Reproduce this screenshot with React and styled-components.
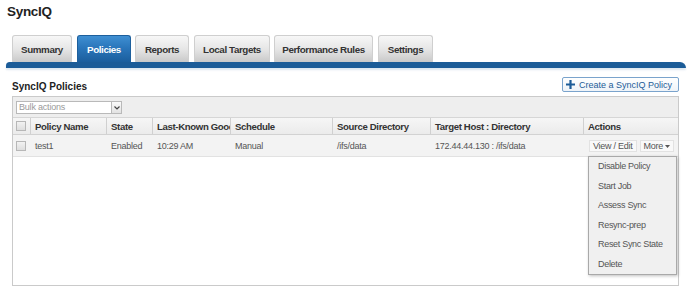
import React from "react";
import styled, { createGlobalStyle } from "styled-components";

const Global = createGlobalStyle`
  html, body { margin: 0; padding: 0; background: #fff; }
  body { font-family: "Liberation Sans", Arial, sans-serif; color: #333; }
  * { box-sizing: border-box; }
`;

const Page = styled.div`
  width: 687px;
  height: 297px;
  padding-top: 4px;
  overflow: hidden;
`;

const Title = styled.h1`
  margin: 0 0 0 7px;
  font-size: 13.5px;
  line-height: 16px;
  font-weight: bold;
  letter-spacing: -0.3px;
  color: #222;
`;

const TabRow = styled.div`
  display: flex;
  align-items: flex-end;
  margin-top: 15px;
  padding-left: 12px;
  height: 27px;
`;

const Tab = styled.div`
  width: ${(p) => p.$w}px;
  margin-right: ${(p) => p.$gap}px;
  height: 27px;
  display: flex;
  align-items: center;
  justify-content: center;
  font-size: 9.8px;
  font-weight: bold;
  letter-spacing: -0.4px;
  white-space: nowrap;
  border-radius: 3px 3px 0 0;
  border: 1px solid ${(p) => (p.$active ? "#1d5f9c" : "#cfcfcf")};
  border-bottom: none;
  color: ${(p) => (p.$active ? "#fff" : "#333")};
  background: ${(p) =>
    p.$active
      ? "linear-gradient(#3f8fd2, #2a76bb 45%, #1b5e9d)"
      : "linear-gradient(#f7f7f7, #e6e6e6 50%, #c9c9c9)"};
`;

const BlueBar = styled.div`
  height: 6px;
  margin: 0 1px 0 6px;
  background: #1b5c98;
  border-radius: 5px 8px 0 0;
  box-shadow: 0 2px 2px rgba(27, 92, 152, 0.15);
`;

const Content = styled.div`
  padding: 0 8px 0 12px;
`;

const SectionHead = styled.div`
  display: flex;
  justify-content: space-between;
  align-items: center;
  margin-top: 9px;
  height: 15px;
`;

const SectionTitle = styled.h2`
  margin: 3px 0 0 0;
  font-size: 10px;
  font-weight: bold;
  color: #222;
`;

const CreateButton = styled.button`
  display: flex;
  align-items: center;
  gap: 4px;
  height: 15px;
  padding: 0 6px 0 3px;
  border: 1px solid #7aa3cc;
  border-radius: 2px;
  background: linear-gradient(#ffffff, #eef3f8);
  color: #1d5c98;
  font-family: "Liberation Sans", Arial, sans-serif;
  font-size: 9px;
  cursor: pointer;
`;

const Panel = styled.div`
  margin-top: 4px;
  height: 190px;
  border: 1px solid #cacaca;
  background: #fff;
`;

const Toolbar = styled.div`
  height: 20px;
  background: #eeeeee;
  padding: 4px 3px;
  display: flex;
`;

const SelectBox = styled.div`
  display: flex;
  height: 13px;
`;

const SelectField = styled.div`
  width: 96px;
  height: 13px;
  border: 1px solid #b9b9b9;
  background: #fff;
  font-size: 9px;
  letter-spacing: -0.2px;
  line-height: 11px;
  color: #9a9a9a;
  padding-left: 2px;
`;

const SelectArrow = styled.div`
  width: 10px;
  height: 13px;
  border: 1px solid #b9b9b9;
  border-left: none;
  background: linear-gradient(#fafafa, #e2e2e2);
  display: flex;
  align-items: center;
  justify-content: center;
`;

const cols = "17px 76px 46px 78px 102px 98px 153px 1fr";

const HeaderRow = styled.div`
  display: grid;
  grid-template-columns: ${cols};
  height: 18px;
  border-top: 1px solid #d6d6d6;
  border-bottom: 1px solid #d2d2d2;
  background: linear-gradient(#f6f6f6, #ebebeb);
`;

const HeadCell = styled.div`
  display: flex;
  align-items: center;
  padding-left: ${(p) => (p.$check ? 3 : 4)}px;
  border-left: ${(p) => (p.$first ? "none" : "1px solid #d0d0d0")};
  font-size: 9.6px;
  font-weight: bold;
  letter-spacing: -0.35px;
  color: #333;
  white-space: nowrap;
  overflow: hidden;
`;

const DataRow = styled.div`
  display: grid;
  grid-template-columns: ${cols};
  height: 22px;
  background: #f3f3f3;
  border-bottom: 1px solid #e2e2e2;
`;

const Cell = styled.div`
  display: flex;
  align-items: center;
  padding-left: ${(p) => (p.$check ? 3 : 5)}px;
  padding-top: 1px;
  font-size: 9px;
  letter-spacing: -0.25px;
  color: #555;
  white-space: nowrap;
  overflow: visible;
  position: relative;
`;

const Check = styled.span`
  display: inline-block;
  width: 10px;
  height: 10px;
  border: 1px solid #b7b7b7;
  background: linear-gradient(#f2f2f2, #dedede);
`;

const ActionButtons = styled.div`
  display: flex;
  gap: 3px;
  margin-left: 1px;
`;

const SmallButton = styled.span`
  display: inline-flex;
  align-items: center;
  gap: 2px;
  height: 12px;
  padding: 0 3px;
  border: 1px solid #e2e2e2;
  background: #f9f9f9;
  color: #555;
  font-size: 9px;
  letter-spacing: -0.25px;
`;

const Menu = styled.ul`
  position: absolute;
  top: 21px;
  left: 5px;
  width: 89px;
  margin: 0;
  padding: 0;
  list-style: none;
  background: #f0f0f0;
  border: 1px solid #a9a9a9;
  box-shadow: 1px 1px 3px rgba(0, 0, 0, 0.25);
  z-index: 5;
`;

const MenuItem = styled.li`
  height: 19.5px;
  line-height: 19.5px;
  padding-left: 9px;
  font-size: 9px;
  letter-spacing: -0.3px;
  color: #555;
`;

const columns = [
  "Policy Name",
  "State",
  "Last-Known Good",
  "Schedule",
  "Source Directory",
  "Target Host : Directory",
  "Actions",
];

const tabs = [
  { label: "Summary", w: 60, gap: 5 },
  { label: "Policies", w: 54, gap: 4, active: true },
  { label: "Reports", w: 54, gap: 5 },
  { label: "Local Targets", w: 76, gap: 4 },
  { label: "Performance Rules", w: 99, gap: 5 },
  { label: "Settings", w: 55, gap: 0 },
];

const menuItems = [
  "Disable Policy",
  "Start Job",
  "Assess Sync",
  "Resync-prep",
  "Reset Sync State",
  "Delete",
];

export default function App() {
  return (
    <Page>
      <Global />
      <Title>SyncIQ</Title>
      <TabRow>
        {tabs.map((t) => (
          <Tab key={t.label} $w={t.w} $gap={t.gap} $active={t.active}>
            {t.label}
          </Tab>
        ))}
      </TabRow>
      <BlueBar />
      <Content>
        <SectionHead>
          <SectionTitle>SyncIQ Policies</SectionTitle>
          <CreateButton>
            <svg width="9" height="9" viewBox="0 0 9 9">
              <path d="M3.4 0h2.2v3.4H9v2.2H5.6V9H3.4V5.6H0V3.4h3.4z" fill="#1d5c98" />
            </svg>
            Create a SyncIQ Policy
          </CreateButton>
        </SectionHead>
        <Panel>
          <Toolbar>
            <SelectBox>
              <SelectField>Bulk actions</SelectField>
              <SelectArrow>
                <svg width="6" height="4" viewBox="0 0 6 4">
                  <path d="M0.5 0.5L3 3L5.5 0.5" fill="none" stroke="#444" strokeWidth="1.2" />
                </svg>
              </SelectArrow>
            </SelectBox>
          </Toolbar>
          <HeaderRow>
            <HeadCell $first $check>
              <Check />
            </HeadCell>
            {columns.map((c) => (
              <HeadCell key={c}>{c}</HeadCell>
            ))}
          </HeaderRow>
          <DataRow>
            <Cell $check>
              <Check />
            </Cell>
            <Cell>test1</Cell>
            <Cell>Enabled</Cell>
            <Cell>10:29 AM</Cell>
            <Cell>Manual</Cell>
            <Cell>/ifs/data</Cell>
            <Cell>172.44.44.130 : /ifs/data</Cell>
            <Cell>
              <ActionButtons>
                <SmallButton>View / Edit</SmallButton>
                <SmallButton>
                  More
                  <svg width="5" height="3" viewBox="0 0 5 3">
                    <path d="M0 0h5L2.5 3z" fill="#555" />
                  </svg>
                </SmallButton>
              </ActionButtons>
              <Menu>
                {menuItems.map((m) => (
                  <MenuItem key={m}>{m}</MenuItem>
                ))}
              </Menu>
            </Cell>
          </DataRow>
        </Panel>
      </Content>
    </Page>
  );
}
